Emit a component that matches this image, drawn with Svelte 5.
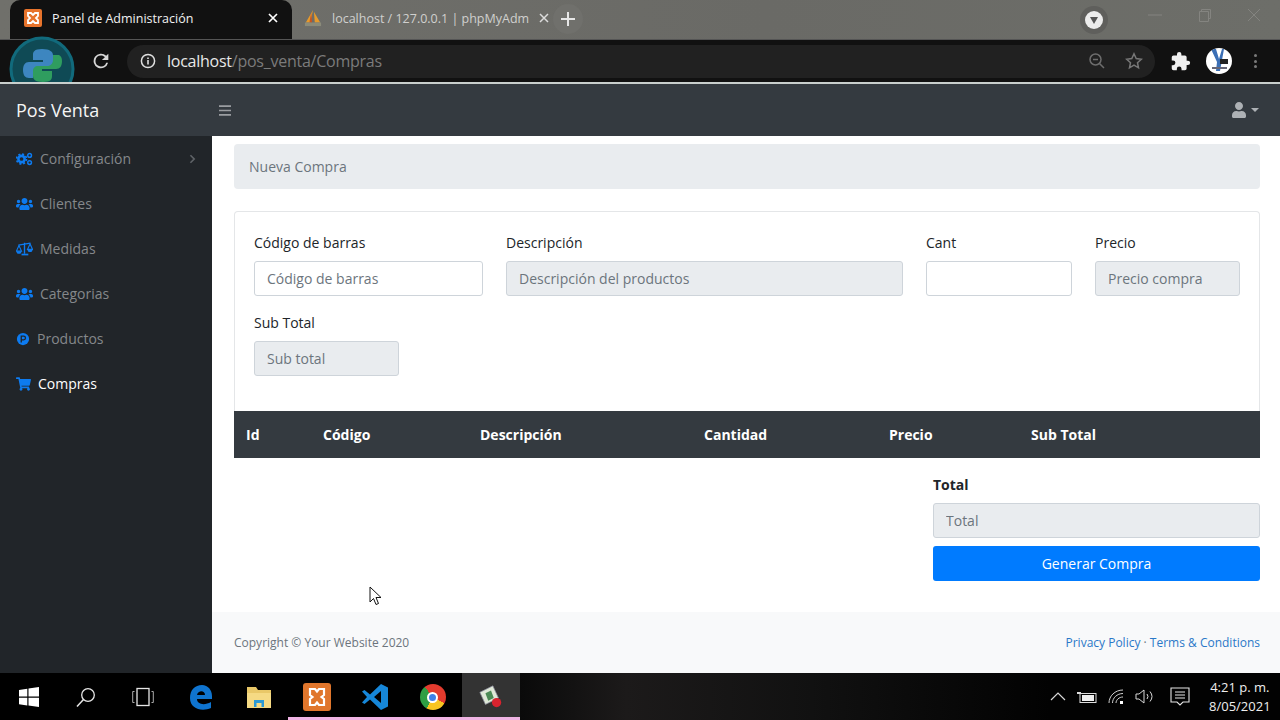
<script>
  const USERS = "M96 224c35.3 0 64-28.7 64-64s-28.7-64-64-64-64 28.7-64 64 28.7 64 64 64zm448 0c35.3 0 64-28.7 64-64s-28.7-64-64-64-64 28.7-64 64 28.7 64 64 64zm32 32h-64c-17.6 0-33.5 7.1-45.1 18.6 40.3 22.1 68.9 62 75.1 109.4h66c17.7 0 32-14.3 32-32v-32c0-35.3-28.7-64-64-64zm-256 0c61.9 0 112-50.1 112-112S381.9 32 320 32 208 82.1 208 144s50.1 112 112 112zm76.8 32h-8.3c-20.8 10-43.9 16-68.5 16s-47.6-6-68.5-16h-8.3C179.6 288 128 339.6 128 403.2V432c0 26.5 21.5 48 48 48h288c26.5 0 48-21.5 48-48v-28.8c0-63.6-51.6-115.2-115.2-115.2zm-223.7-13.4C161.5 263.1 145.6 256 128 256H64c-35.3 0-64 28.7-64 64v32c0 17.7 14.3 32 32 32h65.9c6.3-47.4 34.9-87.3 75.2-109.4z";
  const CART = "M528.12 301.319l47.273-208C578.806 78.301 567.391 64 551.99 64H159.208l-9.166-44.81C147.758 8.021 137.93 0 126.529 0H24C10.745 0 0 10.745 0 24v16c0 13.255 10.745 24 24 24h69.883l70.248 343.435C147.325 417.1 136 435.222 136 456c0 30.928 25.072 56 56 56s56-25.072 56-56c0-15.674-6.447-29.835-16.824-40h209.647C430.447 426.165 424 440.326 424 456c0 30.928 25.072 56 56 56s56-25.072 56-56c0-22.172-12.888-41.332-31.579-50.405l5.517-24.276c3.413-15.018-8.002-29.319-23.403-29.319H218.117l-6.545-32h293.145c11.206 0 20.92-7.754 23.403-18.681z";
  const USER = "M224 256c70.7 0 128-57.3 128-128S294.7 0 224 0 96 57.3 96 128s57.3 128 128 128zm89.6 32h-16.7c-22.2 10.2-46.9 16-72.9 16s-50.6-5.8-72.9-16h-16.7C60.2 288 0 348.2 0 422.4V464c0 26.5 21.5 48 48 48h352c26.5 0 48-21.5 48-48v-41.6c0-74.2-60.2-134.4-134.4-134.4z";
  const columns = ["Id", "Código", "Descripción", "Cantidad", "Precio", "Sub Total"];
</script>

<div class="screen">
  <div class="python" aria-hidden="true">
    <svg viewBox="0 0 66 46" width="66" height="46">
      <circle cx="33" cy="33" r="31" fill="#0f4a55" stroke="#116a7c" stroke-width="3"/>
      <path d="M33 13c-8 0-9 3-9 6v5h10v2H20c-4 0-6 3-6 8s2 8 6 8h4v-5c0-4 3-6 6-6h9c3 0 5-2 5-5v-7c0-3-3-6-11-6z" fill="#3d86c0"/>
      <path d="M34 46c8 0 9-3 9-6v-5H33v-2h14c4 0 6-3 6-8 0-3-1-5-3-6h-6v5c0 4-3 6-6 6h-9c-3 0-5 2-5 5v5c0 3 2 6 10 6z" fill="#2f9d5f"/>
    </svg>
  </div>

  <header class="tabstrip">
    <div class="tab active">
      <svg class="fav" viewBox="0 0 18 18"><rect width="18" height="18" rx="2" fill="#e8742c"/><path d="M4 4h3l2 2 2-2h3v3l-2 2 2 2v3h-3l-2-2-2 2H4v-3l2-2-2-2z" fill="none" stroke="#fff" stroke-width="1.8"/></svg>
      <span class="tabtitle">Panel de Administración</span>
      <svg class="tabx" viewBox="0 0 10 10"><path d="M1 1l8 8M9 1l-8 8" stroke="#fff" stroke-width="1.7"/></svg>
    </div>
    <div class="tab other">
      <svg class="fav" viewBox="0 0 20 20"><path d="M10 1L2 15h5zM11 3l1 12h6z" fill="#e69a2c"/><path d="M8 4l-2 11h3z" fill="#c8551f"/><rect x="1" y="15" width="18" height="4" fill="#8b8b7a"/></svg>
      <span class="tabtitle dim">localhost / 127.0.0.1 | phpMyAdm</span>
      <svg class="tabx" viewBox="0 0 10 10"><path d="M1 1l8 8M9 1l-8 8" stroke="#dcdcdc" stroke-width="1.5"/></svg>
    </div>
    <div class="plus">
      <svg viewBox="0 0 14 14" width="14" height="14"><path d="M7 0v14M0 7h14" stroke="#e6e6e6" stroke-width="2"/></svg>
    </div>
    <div class="spacer"></div>
    <div class="media"><svg viewBox="0 0 8 7" width="8" height="7"><path d="M0 0h8L4 7z" fill="#555"/></svg></div>
    <div class="winbtns">
      <svg viewBox="0 0 14 14" width="14" height="14"><path d="M0 7h14" stroke="#8a8a86" stroke-width="1"/></svg>
      <svg viewBox="0 0 14 14" width="14" height="14"><path d="M1.5 3.5h9v10h-9zM3.5 3.5v-2h9v9h-2" fill="none" stroke="#8a8a86"/></svg>
      <svg viewBox="0 0 14 14" width="14" height="14"><path d="M1 1l12 12M13 1L1 13" stroke="#8a8a86"/></svg>
    </div>
  </header>

  <div class="toolbar">
    <svg class="reload" viewBox="0 0 24 24"><path d="M17.65 6.35A8 8 0 1 0 19.73 14h-2.08A6 6 0 1 1 12 6c1.66 0 3.14.69 4.22 1.78L13 11h7V4z" fill="#d8d8d8"/></svg>
    <div class="omnibox">
      <svg class="info" viewBox="0 0 16 16"><circle cx="8" cy="8" r="6.6" fill="none" stroke="#e0e0e0" stroke-width="1.5"/><path d="M8 7v4.5M8 4.4v1.6" stroke="#e0e0e0" stroke-width="1.6"/></svg>
      <span class="url"><b>localhost</b>/pos_venta/Compras</span>
      <span class="spacer"></span>
      <svg class="omni-icon" viewBox="0 0 18 18"><circle cx="7.5" cy="7.5" r="5.5" fill="none" stroke="#6d6d6d" stroke-width="1.5"/><path d="M11.5 11.5L16 16M5 7.5h5" stroke="#6d6d6d" stroke-width="1.5"/></svg>
      <svg class="omni-icon star" viewBox="0 0 18 18"><path d="M9 1.8l2.2 4.8 5.1.6-3.8 3.5 1 5.1L9 13.2l-4.5 2.6 1-5.1-3.8-3.5 5.1-.6z" fill="none" stroke="#777" stroke-width="1.5"/></svg>
    </div>
    <svg class="puzzle" viewBox="0 0 24 24"><path d="M20.5 11H19V7a2 2 0 0 0-2-2h-4V3.5a2.5 2.5 0 0 0-5 0V5H4a2 2 0 0 0-2 2v3.800h1.500a2.700 2.700 0 0 1 0 5.400H2V20a2 2 0 0 0 2 2h3.800v-1.500a2.700 2.700 0 0 1 5.400 0V22H17a2 2 0 0 0 2-2v-4h1.500a2.500 2.500 0 0 0 0-5z" fill="#f0f0f0"/></svg>
    <div class="avatar">
      <svg viewBox="0 0 26 26" width="26" height="26"><path d="M5 1l5 0 3 10 3-10h2l-4 22h-4l1-9z" fill="#3b6fb5"/><rect x="14" y="11" width="8" height="5" fill="#222"/><rect x="6" y="19" width="15" height="2" fill="#667"/></svg>
    </div>
    <div class="kebab"><i></i><i></i><i></i></div>
  </div>
  <div class="hairline"></div>

  <div class="appbar">
    <div class="brand">Pos Venta</div>
    <svg class="burger" viewBox="0 0 12 11"><path d="M0 1.200h12M0 5.500h12M0 9.800h12" stroke="#9a9da1" stroke-width="1.700"/></svg>
    <div class="spacer"></div>
    <div class="usermenu">
      <svg class="usericon" viewBox="0 0 448 512"><path d={USER} fill="#adb1b5"/></svg>
      <span class="caret"></span>
    </div>
  </div>

  <div class="workspace">
    <nav class="sidebar">
      <a class="item">
        <svg class="ico" viewBox="0 0 20 16">
          <circle cx="6.500" cy="8" r="3.700" fill="none" stroke="#0d7bf0" stroke-width="3"/>
          <circle cx="6.500" cy="8" r="5.800" fill="none" stroke="#0d7bf0" stroke-width="2" stroke-dasharray="2.400 2.150"/>
          <circle cx="16" cy="3.800" r="2.200" fill="none" stroke="#0d7bf0" stroke-width="1.700"/>
          <circle cx="16" cy="12.200" r="2.200" fill="none" stroke="#0d7bf0" stroke-width="1.700"/>
        </svg>
        <span>Configuración</span>
        <svg class="chev" viewBox="0 0 8 12"><path d="M1.500 1.500L6 6l-4.500 4.500" fill="none" stroke="#5f6367" stroke-width="2"/></svg>
      </a>
      <a class="item">
        <svg class="ico" viewBox="0 0 640 512"><path d={USERS} fill="#0d7bf0"/></svg>
        <span>Clientes</span>
      </a>
      <a class="item">
        <svg class="ico" viewBox="0 0 20 16">
          <path d="M10 .5v13M3 3.500l14-2.500" stroke="#0d7bf0" stroke-width="1.600" fill="none"/>
          <path d="M6.500 14.500h8" stroke="#0d7bf0" stroke-width="2"/>
          <path d="M3.500 4L.5 10.500h6zM16.500 2l-3 6.500h6z" fill="none" stroke="#0d7bf0" stroke-width="1.300"/>
          <path d="M.5 10.500a3 3 0 0 0 6 0zM13.500 8.500a3 3 0 0 0 6 0z" fill="#0d7bf0"/>
        </svg>
        <span>Medidas</span>
      </a>
      <a class="item">
        <svg class="ico" viewBox="0 0 640 512"><path d={USERS} fill="#0d7bf0"/></svg>
        <span>Categorias</span>
      </a>
      <a class="item tight">
        <svg class="ico small" viewBox="0 0 16 16"><circle cx="8" cy="8" r="7" fill="#0d7bf0"/><path d="M6 12V4.800h2.700a2 2 0 0 1 0 4.200H6" fill="none" stroke="#212529" stroke-width="1.500"/></svg>
        <span>Productos</span>
      </a>
      <a class="item current">
        <svg class="ico cart" viewBox="0 0 576 512"><path d={CART} fill="#0d7bf0"/></svg>
        <span>Compras</span>
      </a>
    </nav>

    <main class="content">
      <div class="crumb">Nueva Compra</div>

      <section class="card">
        <div class="form">
          <div class="field"><label for="f1">Código de barras</label><input id="f1" placeholder="Código de barras" /></div>
          <div class="field"><label for="f2">Descripción</label><input id="f2" class="off" placeholder="Descripción del productos" readonly /></div>
          <div class="field"><label for="f3">Cant</label><input id="f3" /></div>
          <div class="field"><label for="f4">Precio</label><input id="f4" class="off" placeholder="Precio compra" readonly /></div>
          <div class="field narrow"><label for="f5">Sub Total</label><input id="f5" class="off" placeholder="Sub total" readonly /></div>
        </div>
        <div class="thead">
          {#each columns as c}<div class="th">{c}</div>{/each}
        </div>
      </section>

      <section class="totals">
        <label class="totlabel" for="tot">Total</label>
        <input id="tot" class="off" placeholder="Total" readonly />
        <button class="primary">Generar Compra</button>
      </section>

      <div class="grow"></div>

      <footer class="foot">
        <span>Copyright © Your Website 2020</span>
        <span class="links"><a>Privacy Policy</a> · <a>Terms &amp; Conditions</a></span>
      </footer>
    </main>
  </div>

  <div class="taskbar">
    <div class="tb s">
      <svg viewBox="0 0 20 20" width="20" height="20"><path d="M0 3l8.300-1.200V9.500H0zM9.500 1.600L20 0v9.500H9.500zM0 10.700h8.300v7.700L0 17.200zM9.500 10.700H20V20L9.500 18.500z" fill="#fff"/></svg>
    </div>
    <div class="tb s">
      <svg viewBox="0 0 20 20" width="20" height="20"><circle cx="12" cy="8" r="6.300" fill="none" stroke="#e6e6e6" stroke-width="1.300"/><path d="M7.500 12.500L1 19.500" stroke="#e6e6e6" stroke-width="1.500"/></svg>
    </div>
    <div class="tb s">
      <svg viewBox="0 0 22 20" width="22" height="20"><rect x="5" y="1.500" width="12" height="17" fill="none" stroke="#e6e6e6" stroke-width="1.300"/><path d="M2.500 4.500H.7v11h1.800M19.500 4.500h1.800v11h-1.800" fill="none" stroke="#aaa"/></svg>
    </div>
    <div class="tb">
      <svg viewBox="0 0 24 26" width="24" height="26"><path d="M1 14C1 6 6 1 13 1c6 0 10 5 10 11v3H8c0 5 7 7 14 3v6c-9 4-21 1-21-10zm7-3h8c0-5-7-5-8 0z" fill="#0f74cf"/></svg>
    </div>
    <div class="tb">
      <svg viewBox="0 0 26 24" width="26" height="24"><path d="M1 2h9l2 3h13v18H1z" fill="#e9c868"/><path d="M1 8h24v15H1z" fill="#f5da84"/><path d="M8 22v-7h10v7h-2.500v-4h-5v4z" fill="#2b9ad6"/></svg>
    </div>
    <div class="tb open">
      <svg viewBox="0 0 28 28" width="28" height="28"><rect width="28" height="28" rx="3" fill="#e0762c"/><path d="M7 6h5l2 2.500L16 6h5v6l-2.500 2 2.500 2v6h-5l-2-2.500-2 2.500H7v-6l2.500-2L7 12z" fill="none" stroke="#fff" stroke-width="2.200"/></svg>
    </div>
    <div class="tb open">
      <svg viewBox="0 0 28 28" width="28" height="28"><path d="M20 1l7 3.500v19L20 27 9 16.500 3.500 21 1 19.500 6 14 1 8.500 3.500 7 9 11.500zM20 8l-7 6 7 6z" fill="#1687d9"/></svg>
    </div>
    <div class="tb open">
      <div class="chrome"><div class="chrome-core"></div></div>
    </div>
    <div class="tb open lit">
      <svg viewBox="0 0 28 28" width="26" height="26"><path d="M2 9l14-7 6 13-14 7z" fill="#dfe8d8" stroke="#889" stroke-width=".8"/><path d="M8 10l6-3 3 8-6 3z" fill="#4b8a55"/><circle cx="20" cy="20" r="5" fill="#d8232f"/></svg>
    </div>

    <div class="wall"></div>

    <div class="tray">
      <svg viewBox="0 0 16 9" width="16" height="9"><path d="M1 8l7-7 7 7" fill="none" stroke="#d8d8d8" stroke-width="1.200"/></svg>
      <svg viewBox="0 0 20 12" width="20" height="12"><rect x="3" y="2.500" width="16" height="9" fill="none" stroke="#ddd"/><rect x="5" y="4" width="12" height="6" fill="#eee"/><path d="M0 1h4v2H0z" fill="#ddd"/></svg>
      <svg viewBox="0 0 16 15" width="16" height="15"><path d="M1 14C1 7 7 1 15 1M4.500 14c0-5 4.500-9.500 10.500-9.500M8 14c0-3 3-6 7-6" fill="none" stroke="#cfcfcf"/><rect x="12" y="12" width="3" height="3" fill="#fff"/></svg>
      <svg viewBox="0 0 20 15" width="20" height="15"><path d="M1 5h3l5-4v13l-5-4H1z" fill="none" stroke="#d8d8d8"/><path d="M12 5a4 4 0 0 1 0 5M15 2.500a8 8 0 0 1 0 10" fill="none" stroke="#d8d8d8"/></svg>
      <svg class="note" viewBox="0 0 20 20" width="20" height="20"><path d="M1 1h18v14h-6l-3 3-3-3H1z" fill="none" stroke="#e6e6e6" stroke-width="1.100"/><path d="M5 5h10M5 8h10M5 11h10" stroke="#e6e6e6"/></svg>
      <div class="clock"><span>4:21 p. m.</span><span>8/05/2021</span></div>
    </div>
  </div>

  <svg class="cursor" viewBox="0 0 14 20" width="14" height="20"><path d="M1 1v15l3.500-3.500 2.500 6 2.500-1-2.500-6H12z" fill="#fff" stroke="#111"/></svg>
</div>

<style>
  :global(body) { margin: 0; background: #000; }
  .screen {
    position: relative;
    width: 1280px;
    height: 720px;
    overflow: hidden;
    display: flex;
    flex-direction: column;
    font-family: "Open Sans", "Noto Sans", sans-serif;
    font-size: 14px;
    color: #212529;
  }
  .spacer { flex: 1; }

  .python { position: absolute; left: 9px; top: 36px; width: 66px; height: 46px; z-index: 2; }

  .tabstrip {
    height: 40px;
    flex: none;
    display: flex;
    align-items: flex-end;
    background: linear-gradient(90deg, #70706b, #6a6a66 60%, #6d6e69);
    box-sizing: border-box;
    padding-left: 10px;
    border-bottom: 1px solid #555;
  }
  .tab {
    height: 39px;
    display: flex;
    align-items: center;
    box-sizing: border-box;
    font-size: 12.500px;
  }
  .tab.active {
    width: 282px;
    padding: 0 14px 3px 14px;
    background: #111;
    border-radius: 10px 10px 0 0;
    color: #f2f2f2;
  }
  .tab.other { width: 268px; padding: 0 13px 3px 12px; color: #d4d4d2; width: 270px; }
  .fav { width: 18px; height: 18px; flex: none; }
  .tabtitle { margin-left: 10px; flex: 1; white-space: nowrap; overflow: hidden; }
  .tabtitle.dim { color: #d0d0ce; }
  .tabx { width: 10px; height: 10px; flex: none; margin-left: 6px; }
  .plus {
    width: 30px;
    height: 30px;
    margin: 0 0 5px -1px;
    border-radius: 50%;
    background: #70706c;
    display: flex;
    align-items: center;
    justify-content: center;
    position: relative;
    left: -8px;
  }
  .media {
    width: 18px;
    height: 18px;
    border-radius: 50%;
    background: #ececec;
    box-shadow: 0 0 0 5px #5f5f5c;
    margin: 0 0 10px 0;
    display: flex;
    align-items: center;
    justify-content: center;
    position: relative;
  }
  .winbtns {
    width: 177px;
    display: flex;
    justify-content: space-between;
    align-items: center;
    box-sizing: border-box;
    padding: 0 19px 0 45px;
    height: 39px;
    margin-bottom: 5px;
    opacity: .8;
  }

  .toolbar {
    height: 42px;
    flex: none;
    background: #111;
    display: flex;
    align-items: center;
  }
  .reload { width: 22px; height: 22px; margin-left: 90px; flex: none; }
  .omnibox {
    width: 1028px;
    height: 33px;
    margin-left: 15px;
    border-radius: 17px;
    background: #212121;
    display: flex;
    align-items: center;
    box-sizing: border-box;
    padding: 0 12px 0 13px;
  }
  .info { width: 16px; height: 16px; flex: none; }
  .url { margin-left: 11px; font-size: 16px; color: #7b7b7b; letter-spacing: -.25px; }
  .url b { color: #e8e8e8; font-weight: 400; }
  .omni-icon { width: 18px; height: 18px; flex: none; }
  .star { margin-left: 19px; }
  .puzzle { width: 21px; height: 21px; margin-left: 15px; flex: none; }
  .avatar {
    width: 26px;
    height: 26px;
    border-radius: 50%;
    background: #fff;
    margin-left: 15px;
    overflow: hidden;
    flex: none;
  }
  .kebab { display: flex; flex-direction: column; gap: 2.500px; margin-left: 22px; }
  .kebab i { width: 3px; height: 3px; border-radius: 50%; background: #7a7a7a; display: block; }
  .hairline { height: 2px; flex: none; background: #c9cfcd; }

  .appbar {
    height: 52px;
    flex: none;
    background: #343a40;
    display: flex;
    align-items: center;
  }
  .brand { width: 219px; box-sizing: border-box; padding-left: 16px; font-size: 18px; color: #f4f5f5; }
  .burger { width: 12px; height: 11px; }
  .usermenu { display: flex; align-items: center; margin-right: 21px; }
  .usericon { width: 14px; height: 16px; }
  .caret {
    width: 0;
    height: 0;
    margin-left: 5px;
    border-left: 4px solid transparent;
    border-right: 4px solid transparent;
    border-top: 4px solid #adb1b5;
  }

  .workspace { flex: 1; min-height: 0; display: flex; }
  .sidebar { width: 212px; flex: none; background: #212529; }
  .item {
    height: 45px;
    display: flex;
    align-items: center;
    padding: 0 16px;
    box-sizing: border-box;
    color: #85888b;
    font-size: 14px;
  }
  .item span { margin-left: 7px; flex: 1; }
  .item.tight span { margin-left: 7px; }
  .item.current { color: #fff; }
  .item.current span { margin-left: 7px; }
  .ico { width: 17px; height: 14px; flex: none; }
  .ico.small { width: 14px; height: 14px; }
  .ico.cart { width: 15px; height: 14px; }
  .chev { width: 7px; height: 10px; flex: none; margin-right: 0; }

  .content {
    flex: 1;
    min-width: 0;
    background: #fff;
    display: flex;
    flex-direction: column;
  }
  .crumb {
    margin: 8px 20px 0 22px;
    height: 45px;
    background: #e9ecef;
    border-radius: 4px;
    padding: 0 15px;
    display: flex;
    align-items: center;
    color: #6c757d;
  }
  .card {
    margin: 22px 20px 0 22px;
    border: 1px solid #e4e6e8;
    border-radius: 4px 4px 0 0;
    border-bottom: 0;
  }
  .form {
    display: grid;
    grid-template-columns: 229px 397px 146px 145px;
    column-gap: 23px;
    row-gap: 16px;
    padding: 20px 19px 35px;
  }
  .field { display: flex; flex-direction: column; }
  .field label { height: 21px; line-height: 21px; margin-bottom: 8px; }
  .narrow input { width: 145px; }
  input {
    height: 35px;
    box-sizing: border-box;
    width: 100%;
    border: 1px solid #ced4da;
    border-radius: 3px;
    padding: 0 12px;
    font: inherit;
    color: #495057;
    background: #fff;
    outline: none;
  }
  input::placeholder { color: #6c757d; opacity: 1; }
  input.off { background: #e9ecef; }

  .thead {
    display: grid;
    grid-template-columns: 77px 157px 224px 185px 142px 1fr;
    margin: 0 -1px;
    height: 47px;
    align-items: center;
    background: #343a40;
    color: #fff;
    font-weight: 700;
  }
  .th { padding-left: 12px; }

  .totals {
    margin: 16px 20px 0 auto;
    width: 327px;
    display: flex;
    flex-direction: column;
  }
  .totlabel { font-weight: 700; height: 21px; line-height: 21px; margin-bottom: 8px; }
  .primary {
    margin-top: 8px;
    height: 35px;
    border: 0;
    border-radius: 3px;
    background: #007bff;
    color: #fff;
    font: inherit;
  }
  .grow { flex: 1; }
  .foot {
    height: 61px;
    flex: none;
    background: #f8f9fa;
    display: flex;
    align-items: center;
    justify-content: space-between;
    padding: 0 20px 0 22px;
    font-size: 12px;
    color: #6c757d;
  }
  .links a { color: #2a78c8; }

  .taskbar {
    height: 47px;
    flex: none;
    background: #000;
    display: flex;
    color: #fff;
  }
  .tb {
    width: 58px;
    flex: none;
    display: flex;
    align-items: center;
    justify-content: center;
    box-sizing: border-box;
    padding-top: 1px;
  }
  .tb.s { width: 57.330px; }
  .tb.open { box-shadow: inset 0 -3px 0 #f0b4e4, inset 6px 0 0 #000, inset -6px 0 0 #000; }
  .tb.lit { background: #333; box-shadow: inset 0 -3px 0 #f0b4e4; }
  .chrome {
    width: 26px;
    height: 26px;
    border-radius: 50%;
    background: conic-gradient(#e33b2e 0 120deg, #f9c521 120deg 210deg, #2f9e44 210deg 320deg, #e33b2e 320deg);
    display: flex;
    align-items: center;
    justify-content: center;
  }
  .chrome-core { width: 11px; height: 11px; border-radius: 50%; background: #3f7fe8; border: 2px solid #fff; box-sizing: border-box; }
  .wall { flex: 1; background: linear-gradient(90deg, #0a0a0a, #1c1a1a 20%, #111 55%, #020202); }
  .tray {
    width: 230px;
    flex: none;
    display: flex;
    align-items: center;
    gap: 11px;
    box-sizing: border-box;
    padding-left: 0;
    background: #020202;
  }
  .note { margin-left: 4px; }
  .clock {
    display: flex;
    flex-direction: column;
    align-items: center;
    font-size: 13px;
    line-height: 19px;
    color: #eee;
    margin-left: 8px;
  }
  .cursor { position: absolute; left: 369px; top: 586px; }
</style>
